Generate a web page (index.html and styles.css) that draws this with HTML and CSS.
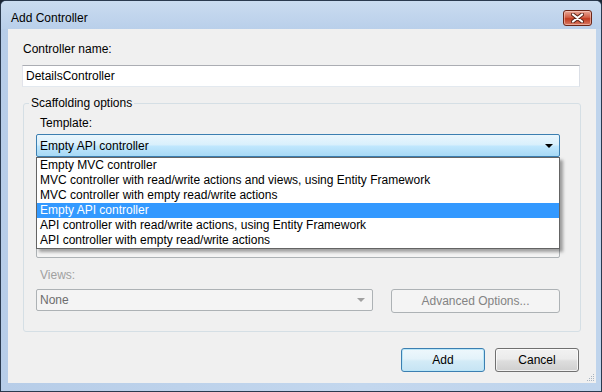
FILE: index.html
```html
<!DOCTYPE html>
<html lang="en">
<head>
    <meta charset="UTF-8">
    <title>Add Controller</title>
    <link rel="stylesheet" href="styles.css">
</head>
<body>
    <div class="window">
        <div class="titlebar">
            <span class="title">Add Controller</span>
            <button class="close-btn" aria-label="Close">
                <svg width="13" height="10" viewBox="0 0 13 10">
                    <path d="M2 1.5 L11 8.5 M11 1.5 L2 8.5" stroke="#5a2418" stroke-width="4" stroke-linecap="round"/>
                    <path d="M2 1.5 L11 8.5 M11 1.5 L2 8.5" stroke="#ffffff" stroke-width="2.2" stroke-linecap="round"/>
                </svg>
            </button>
        </div>
        <div class="client">
            <div class="label">Controller name:</div>
            <div class="textbox">DetailsController</div>

            <fieldset class="group">
                <legend>Scaffolding options</legend>
                <div class="label label-template">Template:</div>
                <div class="template">
                    <div class="combo combo-open">
                        <span>Empty API controller</span>
                        <span class="arrow"></span>
                    </div>
                    <ul class="droplist">
                        <li>Empty MVC controller</li>
                        <li>MVC controller with read/write actions and views, using Entity Framework</li>
                        <li>MVC controller with empty read/write actions</li>
                        <li class="selected">Empty API controller</li>
                        <li>API controller with read/write actions, using Entity Framework</li>
                        <li>API controller with empty read/write actions</li>
                    </ul>
                </div>
                <div class="combo combo-off model"></div>
                <div class="combo combo-off context"></div>

                <div class="label label-off">Views:</div>
                <div class="views-row">
                    <div class="combo combo-off views">
                        <span>None</span>
                        <span class="arrow arrow-off"></span>
                    </div>
                    <button class="btn btn-off">Advanced Options...</button>
                </div>
            </fieldset>

            <div class="actions">
                <button class="btn btn-default">Add</button>
                <button class="btn">Cancel</button>
            </div>
            <svg class="grip" width="9" height="9" viewBox="0 0 9 9">
                <rect x="7" y="1" width="1" height="1" fill="#a8b4c0"/>
                <rect x="5" y="3" width="1" height="1" fill="#a8b4c0"/>
                <rect x="7" y="3" width="1" height="1" fill="#a8b4c0"/>
                <rect x="3" y="5" width="1" height="1" fill="#a8b4c0"/>
                <rect x="5" y="5" width="1" height="1" fill="#a8b4c0"/>
                <rect x="7" y="5" width="1" height="1" fill="#a8b4c0"/>
                <rect x="1" y="7" width="1" height="1" fill="#a8b4c0"/>
                <rect x="3" y="7" width="1" height="1" fill="#a8b4c0"/>
                <rect x="5" y="7" width="1" height="1" fill="#a8b4c0"/>
                <rect x="7" y="7" width="1" height="1" fill="#a8b4c0"/>
            </svg>
        </div>
    </div>
</body>
</html>
```

FILE: styles.css
```css
body {
    margin: 0;
    background-color: #1b2635;
    font-family: "Liberation Sans", Arial, sans-serif;
    font-size: 12px;
    color: #000;
}

.window {
    width: 602px;
    height: 392px;
    box-sizing: border-box;
    border: 1px solid #2a3a4f;
    border-radius: 6px 6px 0 0;
    background: linear-gradient(to right, #b7cde8, #c3d7ee 60%, #bfd4ec);
    display: flex;
    flex-direction: column;
}

.titlebar {
    height: 28px;
    display: flex;
    align-items: flex-start;
    padding: 9px 9px 0 10px;
    box-sizing: border-box;
    border-radius: 5px 5px 0 0;
    background: linear-gradient(to bottom, #cadcf0, #b9cfea);
}

.title {
    line-height: 16px;
    color: #000;
}

.close-btn {
    margin-left: auto;
    width: 29px;
    height: 16px;
    padding: 0;
    border: 1px solid #6b2517;
    border-radius: 3px;
    background: linear-gradient(to bottom, #e9a898, #d26047 45%, #c13a1f 55%, #d77a63);
    display: flex;
    align-items: center;
    justify-content: center;
    box-shadow: inset 0 0 0 1px rgba(255, 220, 210, 0.5);
}

.client {
    position: relative;
    flex: 1;
    margin: 0 5px 8px 7px;
    padding: 13px 0 0 0;
    background-color: #f0f0f0;
    display: flex;
    flex-direction: column;
}

.label {
    line-height: 15px;
    padding-left: 15px;
    margin-bottom: 8px;
}

.textbox {
    height: 22px;
    box-sizing: border-box;
    margin: 0 16px 0 14px;
    padding: 0 3px;
    line-height: 20px;
    background-color: #fff;
    border: 1px solid #e3e9ef;
    border-top-color: #abadb3;
    border-left-color: #e2e3ea;
    border-right-color: #dbdfe6;
}

.group {
    margin: 9px 15px 0 15px;
    padding: 0 20px 18px 12px;
    border: 1px solid #d5dfe5;
    border-radius: 3px;
    min-inline-size: auto;
}

.group legend {
    margin-left: -7px;
    padding: 0 2px;
    line-height: 15px;
}

.group .label {
    padding-left: 4px;
}

.label-template {
    margin-top: 5px;
    margin-bottom: 3px;
}

.template {
    position: relative;
}

.combo {
    height: 23px;
    box-sizing: border-box;
    padding: 0 4px 0 3px;
    display: flex;
    align-items: center;
    border-radius: 2px;
}

.combo-open {
    border: 1px solid #3c7fb1;
    background: linear-gradient(to bottom, #eaf6fd, #d9f0fc 45%, #bee6fd 55%, #a7d9f5);
}

.combo-off {
    border: 1px solid #adb2b5;
    background-color: #f4f4f4;
    color: #6d6d6d;
}

.model {
    margin-top: 27px;
}

.context {
    margin-top: 28px;
}

.arrow {
    margin-left: auto;
    margin-right: 2px;
    width: 0;
    height: 0;
    border-left: 4px solid transparent;
    border-right: 4px solid transparent;
    border-top: 4px solid #000;
}

.arrow-off {
    border-top-color: #a0a0a0;
    margin-right: 3px;
}

.droplist {
    position: absolute;
    top: 100%;
    left: 0;
    right: 0;
    margin: 0;
    padding: 0;
    list-style: none;
    background-color: #fff;
    border: 1px solid #646464;
    box-shadow: 3px 3px 3px rgba(0, 0, 0, 0.35);
    z-index: 10;
}

.droplist li {
    height: 15px;
    line-height: 15px;
    padding-left: 3px;
    white-space: nowrap;
}

.droplist li.selected {
    background-color: #3399ff;
    color: #fff;
}

.label-off {
    color: #a0a0a0;
    margin-top: 10px;
    margin-bottom: 6px;
}

.views-row {
    display: flex;
    gap: 18px;
    align-items: flex-start;
}

.views {
    width: 337px;
    height: 22px;
}

.btn {
    height: 24px;
    width: 84px;
    padding: 0;
    font-family: inherit;
    font-size: 12px;
    color: #000;
    border: 1px solid #707070;
    border-radius: 3px;
    background: linear-gradient(to bottom, #f2f2f2, #ebebeb 45%, #dddddd 55%, #cfcfcf);
    box-shadow: inset 0 0 0 1px rgba(255, 255, 255, 0.7);
}

.btn-off {
    width: 169px;
    color: #838383;
    border-color: #adb2b5;
    background: #f4f4f4;
    box-shadow: none;
}

.btn-default {
    border-color: #3c7fb1;
    background: linear-gradient(to bottom, #eef7fc, #e3f2fa 45%, #d3ebf7 55%, #c6e4f4);
    box-shadow: inset 0 0 0 1px #b9e6f8;
}

.actions {
    display: flex;
    justify-content: flex-end;
    gap: 10px;
    margin-top: 16px;
    padding-right: 17px;
}

.grip {
    position: absolute;
    right: 1px;
    bottom: 1px;
}
```
